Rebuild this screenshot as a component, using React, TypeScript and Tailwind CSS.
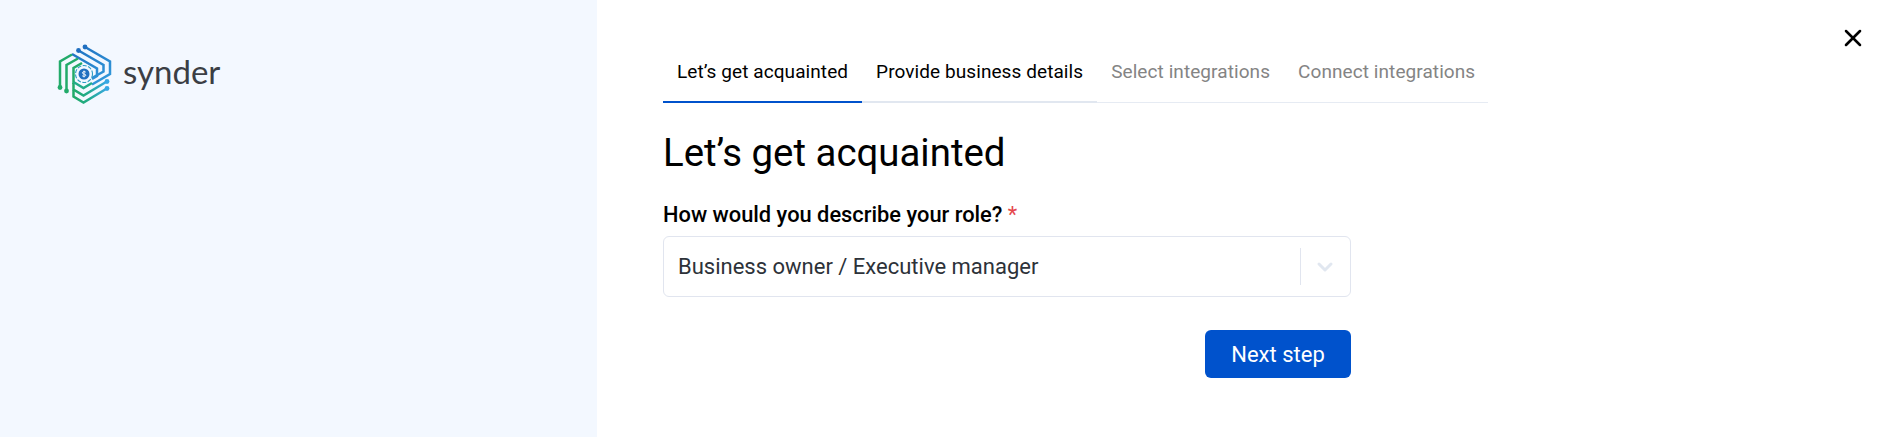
import React from 'react';
import { ChevronDown, X } from 'lucide-react';

const tabs = [
  { label: 'Let’s get acquainted', state: 'active' },
  { label: 'Provide business details', state: 'done' },
  { label: 'Select integrations', state: 'todo' },
  { label: 'Connect integrations', state: 'todo' },
];

const SynderLogo = () => (
  <svg width="70" height="70" viewBox="50 40 70 70" fill="none" strokeWidth="2.5" strokeLinejoin="miter">
    <defs>
      <linearGradient id="synderBlue" x1="75" y1="45" x2="110" y2="100" gradientUnits="userSpaceOnUse">
        <stop offset="0" stopColor="#1f6fc0" />
        <stop offset="1" stopColor="#38a8e4" />
      </linearGradient>
      <linearGradient id="synderEdge" x1="73" y1="90" x2="107" y2="85" gradientUnits="userSpaceOnUse">
        <stop offset="0" stopColor="#22ab6a" />
        <stop offset="0.4" stopColor="#22ab8a" />
        <stop offset="1" stopColor="#38a8e4" />
      </linearGradient>
    </defs>
    {/* blue strands */}
    <path d="M85 47 L110 61.5 V74 L92 84.5" stroke="url(#synderBlue)" />
    <path d="M78.5 50.5 L103.5 65 V71.5 L92 78" stroke="url(#synderBlue)" />
    <path d="M72 54 L97 68.5 V76 L92 79" stroke="url(#synderBlue)" />
    {/* green strands */}
    <path d="M60 87 V61.5 L72 54.5" stroke="#22ab6a" />
    <path d="M66.5 90.5 V65 L78 58.5" stroke="#22ab6a" />
    <path d="M73.5 84 V68 L82 63" stroke="#22ab6a" />
    {/* lower strands */}
    <path d="M73.5 83 V89.5 L83.5 95.5 L106 82" stroke="url(#synderEdge)" />
    <path d="M73.5 90 V96.5 L83.5 102.5 L106 89" stroke="url(#synderEdge)" />
    <path d="M73.5 82 L83.5 88 L92 83" stroke="#22ab8a" />
    <circle cx="60" cy="87.5" r="2.4" fill="#22ab6a" />
    <circle cx="66.5" cy="91" r="2.4" fill="#22ab6a" />
    <circle cx="85" cy="47" r="2.4" fill="#1f6fc0" />
    <circle cx="78.5" cy="50.5" r="2.4" fill="#1f6fc0" />
    <circle cx="107" cy="81.5" r="2.4" fill="#38a8e4" />
    <circle cx="107" cy="88.5" r="2.4" fill="#38a8e4" />
    {/* coin */}
    <circle cx="84" cy="74" r="8.5" fill="#f3f8ff" stroke="#2b9bc4" strokeWidth="1.1" strokeDasharray="4 1.5" />
    <circle cx="84" cy="74" r="5.5" fill="#1f6fc0" />
    <path d="M85.8 72.2 C85.2 71.4 82.4 71.4 82.4 72.9 C82.4 74.6 85.8 73.5 85.8 75.2 C85.8 76.7 82.9 76.5 82.2 75.8 M84 70.6 V77.4" stroke="#ffffff" strokeWidth="0.9" />
  </svg>
);

export default function App() {
  return (
    <div className="relative flex h-[437px] w-full overflow-hidden bg-white font-['Roboto',sans-serif]">
      {/* Left brand panel */}
      <div className="w-[597px] shrink-0 bg-[#f3f8ff] pt-10 pl-[50px]">
        <div className="flex items-start">
          <SynderLogo />
          <span className="ml-[3px] mt-[10px] font-['Lato',sans-serif] text-[33px] leading-[42px] font-normal text-[#3b3e44]">
            synder
          </span>
        </div>
      </div>

      {/* Wizard content */}
      <div className="flex-1 pt-[58px] pl-[66px]">
        <div className="flex w-[825px] border-b border-[#e6ebf3]">
          {tabs.map((tab) => (
            <div
              key={tab.label}
              className={
                tab.state === 'active'
                  ? 'relative -mb-px border-b-2 border-[#0052cc] px-[14px] pt-[2px] pb-[18px] text-[19px] leading-[23px] tracking-[0.08px] whitespace-nowrap text-black'
                  : tab.state === 'done'
                    ? 'relative -mb-px border-b-2 border-[#e1e7f0] px-[14px] pt-[2px] pb-[18px] text-[19px] leading-[23px] tracking-[0.08px] whitespace-nowrap text-black'
                    : 'px-[14px] pt-[2px] pb-[18px] text-[19px] leading-[23px] tracking-[0.08px] whitespace-nowrap text-[#848484]'
              }
            >
              {tab.label}
            </div>
          ))}
        </div>

        <h1 className="mt-[27px] text-[38.4px] leading-[46px] font-normal text-black">Let’s get acquainted</h1>

        <div className="mt-[26px] w-[688px]">
          <label className="block text-[21.85px] leading-[25px] font-medium text-black">
            How would you describe your role? <span className="font-normal text-[#e5484d]">*</span>
          </label>
          <div className="mt-[9px] flex h-[61px] items-center rounded-[6px] border border-[#e1e5ef] bg-white pr-[13px] pl-[14px]">
            <span className="flex-1 text-[22px] text-[#2d3239]">Business owner / Executive manager</span>
            <span className="h-[37px] w-px bg-[#e1e5ef]" />
            <ChevronDown className="ml-[12px] h-[24px] w-[24px] text-[#e1e7f0]" strokeWidth={3} />
          </div>
          <div className="mt-[33px] flex justify-end">
            <button className="h-[48px] w-[146px] rounded-[6px] bg-[#0052cc] text-[22px] font-normal text-white">
              Next step
            </button>
          </div>
        </div>
      </div>

      {/* Close button */}
      <X className="absolute top-[24px] left-[1839px] h-[28px] w-[28px] text-black" strokeWidth={2.2} />
    </div>
  );
}
